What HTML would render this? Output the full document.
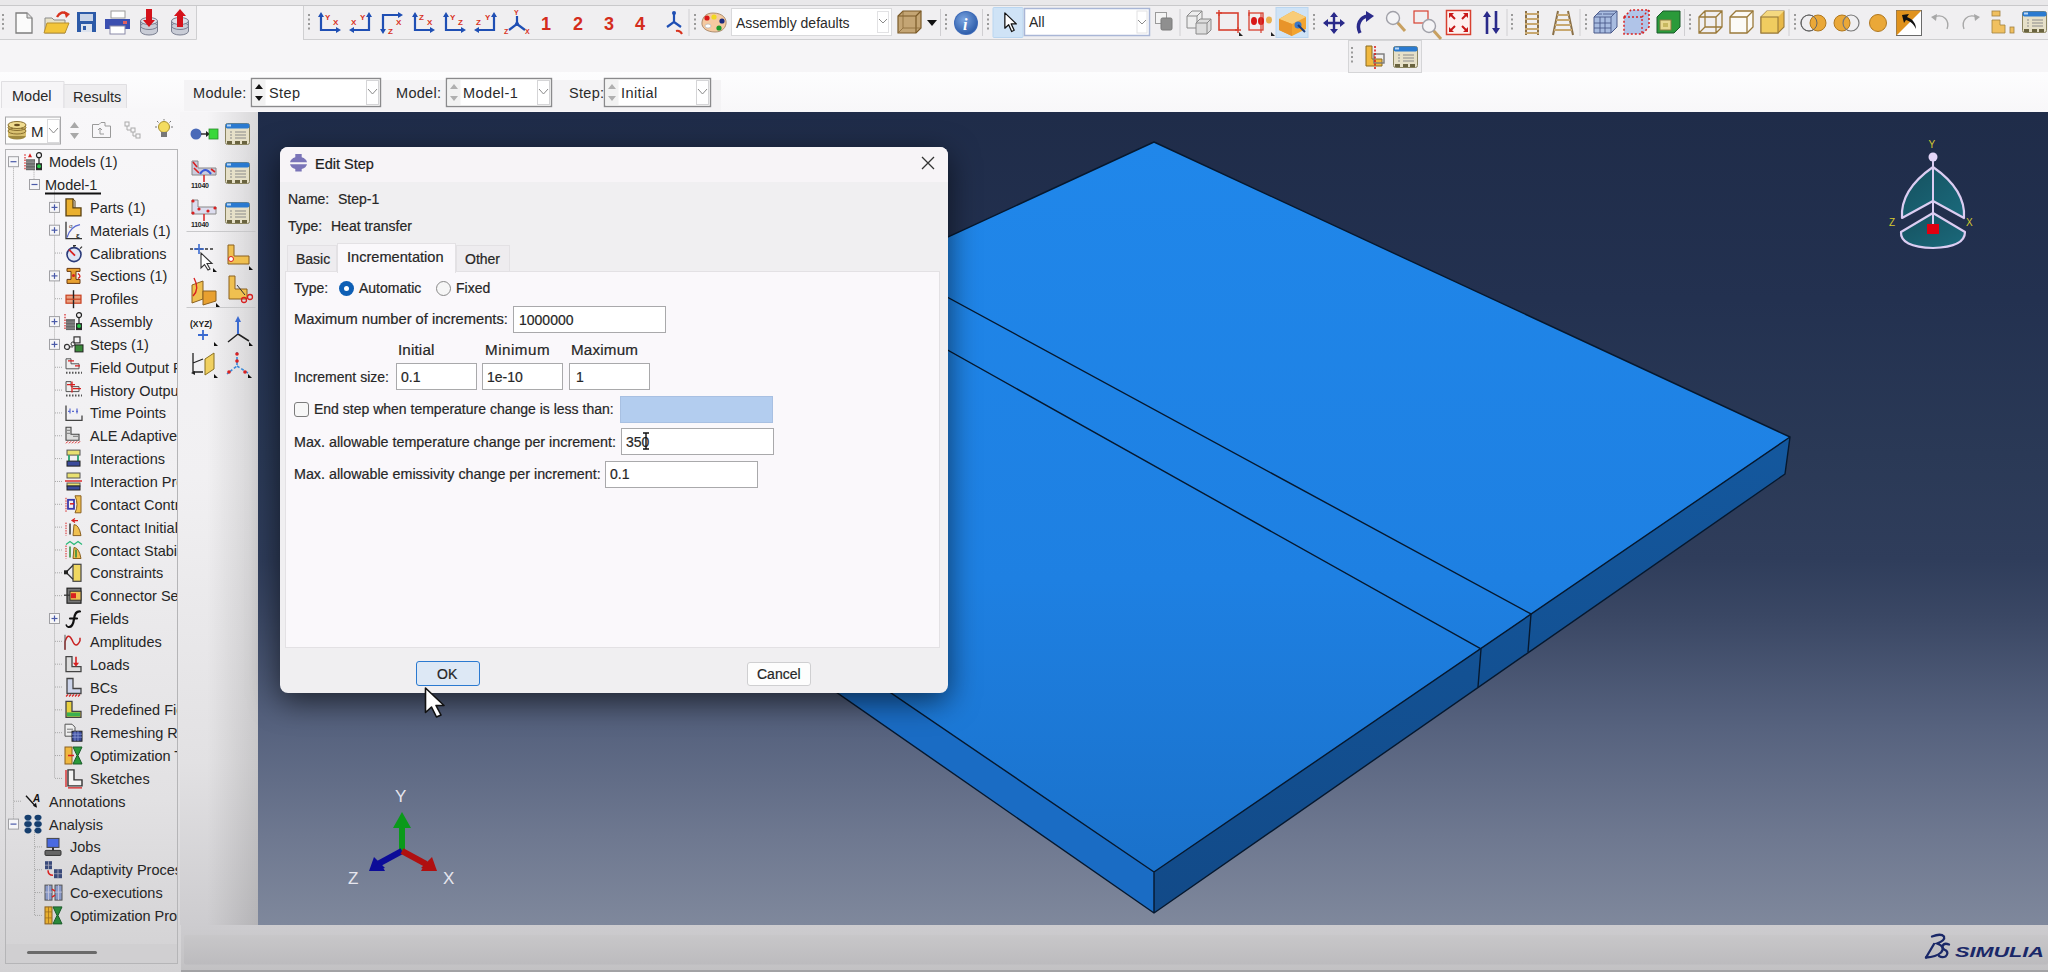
<!DOCTYPE html>
<html><head><meta charset="utf-8">
<style>
*{box-sizing:border-box;margin:0;padding:0}
html,body{width:2048px;height:972px;overflow:hidden;background:#f0f0f0;font-family:"Liberation Sans",sans-serif;color:#222;font-size:14.5px}
svg{font-family:"Liberation Sans",sans-serif}
.a{position:absolute}
.t{position:absolute;white-space:nowrap;line-height:1;-webkit-text-stroke:0.2px currentColor}
#topstrip{left:0;top:0;width:2048px;height:6px;background:#e9e8ea;border-bottom:1px solid #c9c9cb}
#row2{left:0;top:6px;width:2048px;height:66px;background:#f6f5f7}
#row3{left:0;top:72px;width:2048px;height:40px;background:linear-gradient(#fdfdfe,#f8f7f9)}
#dialog{left:280px;top:147px;width:668px;height:546px;background:#f0eff1;border-radius:8px;box-shadow:0 8px 30px rgba(0,0,0,.6);overflow:hidden}
.inp{background:#fff;border:1px solid #a9a9ab}
#dialog .t{color:#262626;font-size:14px}
svg text{stroke:currentColor;stroke-width:0}

</style></head><body>
<svg class="a" style="left:0;top:0" width="2048" height="972" viewBox="0 0 2048 972"><defs><linearGradient id="vbg" x1="0" y1="0" x2="0" y2="1"><stop offset="0" stop-color="#1f2c49"/><stop offset=".23" stop-color="#233150"/><stop offset=".42" stop-color="#2a3956"/><stop offset=".55" stop-color="#2f3d5b"/><stop offset=".62" stop-color="#3a4764"/><stop offset=".756" stop-color="#56627e"/><stop offset=".89" stop-color="#6e7890"/><stop offset="1" stop-color="#7f889c"/></linearGradient><linearGradient id="gtop" gradientUnits="userSpaceOnUse" x1="0" y1="142" x2="0" y2="872"><stop offset="0" stop-color="#2087ea"/><stop offset=".6" stop-color="#1e80e2"/><stop offset="1" stop-color="#1a71ca"/></linearGradient><linearGradient id="gright" gradientUnits="userSpaceOnUse" x1="0" y1="437" x2="0" y2="913"><stop offset="0" stop-color="#14589e"/><stop offset="1" stop-color="#124a88"/></linearGradient><linearGradient id="gpet" x1="0" y1="0" x2="1" y2="1"><stop offset="0" stop-color="#15505e"/><stop offset="1" stop-color="#1b6a7c"/></linearGradient></defs><rect x="258" y="112" width="1790" height="813" fill="url(#vbg)"/><polygon points="1154,142 1790,437 1154,872 514,437" fill="url(#gtop)"/><polygon points="1154,872 1790,437 1785,474 1154,913" fill="url(#gright)"/><polygon points="1154,872 1154,913 700,597.5 700,563" fill="#1a6cc4"/><path d="M514,437 L1154,142 L1790,437 L1154,872 L700,563 M1790,437 L1785,474 L1154,913 L700,597.5 M1154,872 V913" fill="none" stroke="#06182e" stroke-width="1.4" stroke-linejoin="round"/><path d="M888,265 L1531,614 L1528,652 M837,288 L1481,649 L1478,687" fill="none" stroke="#06182e" stroke-width="1.4"/><g stroke="#dccdf2" stroke-width="2.2" fill="url(#gpet)" stroke-linejoin="round"><path d="M1933,167 Q1900,190 1902,218 L1933,201 L1964,218 Q1966,190 1933,167Z"/><path d="M1901,232 L1933,213 L1965,232 Q1965,247 1933,248 Q1900,247 1901,232Z"/></g><path d="M1933,157 V226" stroke="#dccdf2" stroke-width="2"/><circle cx="1933" cy="157" r="4.5" fill="#e4d6f8"/><rect x="1927" y="224" width="12" height="10" fill="#e00010"/><g font-size="10" fill="#d4c830" font-family="Liberation Sans"><text x="1928.5" y="148">Y</text><text x="1889" y="226">Z</text><text x="1966" y="226">X</text></g><path d="M402,851 V826" stroke="#0a9a1a" stroke-width="6"/><path d="M402,812 L411,828 H393Z" fill="#0a9a1a"/><path d="M402,851 L378,864" stroke="#0c0c98" stroke-width="6"/><path d="M369,871 L374,857 L385,868Z" fill="#0c0c98"/><path d="M369,871 H385 L380,862Z" fill="#0c0c98"/><path d="M402,851 L426,864" stroke="#b01010" stroke-width="6"/><path d="M437,871 L432,857 L421,868Z" fill="#b01010"/><path d="M437,871 H421 L426,862Z" fill="#b01010"/><g font-size="17" fill="#e6e6ee" font-family="Liberation Sans"><text x="395" y="802">Y</text><text x="348" y="884">Z</text><text x="443" y="884">X</text></g><defs><linearGradient id="sbg" x1="0" y1="0" x2="0" y2="1"><stop offset="0" stop-color="#cdcccf"/><stop offset="1" stop-color="#c2c1c3"/></linearGradient><linearGradient id="sbg3" x1="0" y1="0" x2="0" y2="1"><stop offset="0" stop-color="#c8c7c9"/><stop offset="1" stop-color="#bcbbbe"/></linearGradient></defs><rect x="180" y="925" width="1868" height="47" fill="url(#sbg)"/><rect x="184" y="935" width="1864" height="29.5" rx="2" fill="url(#sbg3)"/><path d="M180 971 H2048" stroke="#a2a2a4" stroke-width="2"/><g stroke="#1a2868" stroke-width="2.3" fill="none" stroke-linecap="round"><path d="M1932,936.5 Q1941,933 1944,936.5 Q1945.5,940.5 1937,943.5 Q1946,946.5 1941,952.5 Q1936,957 1926,957.5"/><path d="M1926,957.5 L1934,944"/><path d="M1949,944.5 Q1944,942.5 1942.5,946 Q1942,949 1946,950.5 Q1949,953 1945.5,956.5 Q1942,958 1939,956"/></g><text x="1955" y="956.5" font-size="15.5" font-weight="bold" font-style="italic" textLength="89" lengthAdjust="spacingAndGlyphs" fill="#1a2868" stroke="#1a2868" stroke-width=".3" font-family="Liberation Sans">SIMULIA</text></svg>
<div id="topstrip" class="a"></div>
<div id="row2" class="a"></div>
<div id="row3" class="a"></div>
<svg class="a" style="left:0;top:0" width="2048" height="75" viewBox="0 0 2048 75"><defs><radialGradient id="ginfo" cx="0.4" cy="0.35" r="0.7"><stop offset="0" stop-color="#7aa4e0"/><stop offset="1" stop-color="#2a5aa8"/></radialGradient></defs><rect x="0" y="6" width="196.5" height="33" fill="#f0eff1"/><path d="M0 39.5 H196.5 V6" stroke="#cfcfd1" fill="none"/><rect x="303" y="6" width="1745" height="33" fill="#f0eff1"/><path d="M303.5 39 V6 M303 39.5 H2048" stroke="#cfcfd1" fill="none"/><rect x="2" y="14.0" width="2" height="2" fill="#9a9a9a"/><rect x="2" y="18.5" width="2" height="2" fill="#9a9a9a"/><rect x="2" y="23.0" width="2" height="2" fill="#9a9a9a"/><rect x="2" y="27.5" width="2" height="2" fill="#9a9a9a"/><g transform="translate(15,12) scale(1.0)"><path d="M1 1 H12 L17 6 V21 H1Z" fill="#fbfbfb" stroke="#7d7d7d" stroke-width="1.3"/><path d="M12 1 V6 H17" fill="#ddd" stroke="#7d7d7d" stroke-width="1"/></g><g transform="translate(43,9) scale(1.0)"><path d="M2 9 H9 L11 11 H22 V24 H2Z" fill="#e8e2c8" stroke="#8a8a8a" stroke-width="1"/><path d="M4 14 H26 L22 24 H1Z" fill="#f3c53a" stroke="#b89030" stroke-width="1"/><path d="M14 8 Q18 1 24 5" stroke="#d8321e" stroke-width="2.4" fill="none"/><path d="M21 2 L27 5 L23 9Z" fill="#d8321e"/></g><g transform="translate(77,12) scale(1.0)"><rect x="0" y="0" width="19" height="20" fill="#2c5aa8"/><rect x="3" y="2" width="13" height="7" fill="#c8d4e8"/><rect x="4" y="12" width="11" height="8" fill="#dde3ee"/><rect x="6" y="14" width="3" height="4" fill="#2c5aa8"/></g><g transform="translate(105,11) scale(1.0)"><rect x="6" y="0" width="14" height="7" fill="#fff" stroke="#9a9a9a"/><path d="M0 8 H25 V18 H0Z" fill="#3b4fb0"/><rect x="5" y="15" width="15" height="8" fill="#fff" stroke="#8a8aa8"/><rect x="18" y="10" width="4" height="3" fill="#e06060"/></g><g transform="translate(140,9) scale(1.0)"><ellipse cx="9" cy="22" rx="8.5" ry="4" fill="#c9ccd6" stroke="#7a7f90"/><rect x="0.5" y="12" width="17" height="10" fill="#c9ccd6"/><ellipse cx="9" cy="17" rx="8.5" ry="3.5" fill="none" stroke="#7a7f90"/><ellipse cx="9" cy="12" rx="8.5" ry="3.5" fill="#dde0e8" stroke="#7a7f90"/><path d="M0.5 12 V22 M17.5 12 V22" stroke="#7a7f90"/><path d="M6 0 H12 V11 H15 L9 18 L3 11 H6Z" fill="#d4121a"/></g><g transform="translate(171,9) scale(1.0)"><ellipse cx="9" cy="22" rx="8.5" ry="4" fill="#c9ccd6" stroke="#7a7f90"/><rect x="0.5" y="12" width="17" height="10" fill="#c9ccd6"/><ellipse cx="9" cy="17" rx="8.5" ry="3.5" fill="none" stroke="#7a7f90"/><ellipse cx="9" cy="12" rx="8.5" ry="3.5" fill="#dde0e8" stroke="#7a7f90"/><path d="M0.5 12 V22 M17.5 12 V22" stroke="#7a7f90"/><path d="M9 0 L15 7 H12 V18 H6 V7 H3Z" fill="#d4121a"/></g><rect x="308" y="14.0" width="2" height="2" fill="#9a9a9a"/><rect x="308" y="18.5" width="2" height="2" fill="#9a9a9a"/><rect x="308" y="23.0" width="2" height="2" fill="#9a9a9a"/><rect x="308" y="27.5" width="2" height="2" fill="#9a9a9a"/><g transform="translate(318,11) scale(1.0)"><path d="M3 4 V19 H20" stroke="#1f4fb4" stroke-width="2.2" fill="none"/><path d="M0 6 L3 1 L6 6Z M18 16 L23 19 L18 22Z" fill="#1f4fb4"/><text x="7" y="9" font-size="8" font-weight="bold" fill="#d8321e">Y</text><text x="15" y="14" font-size="8" font-weight="bold" fill="#d8321e">X</text></g><g transform="translate(349,11) scale(1.0)"><path d="M20 4 V19 H3" stroke="#1f4fb4" stroke-width="2.2" fill="none"/><path d="M17 6 L20 1 L23 6Z M5 16 L0 19 L5 22Z" fill="#1f4fb4"/><text x="11" y="9" font-size="8" font-weight="bold" fill="#d8321e">Y</text><text x="2" y="14" font-size="8" font-weight="bold" fill="#d8321e">X</text></g><g transform="translate(380,11) scale(1.0)"><path d="M3 20 V4 H20" stroke="#1f4fb4" stroke-width="2.2" fill="none"/><path d="M0 18 L3 23 L6 18Z M18 1 L23 4 L18 7Z" fill="#1f4fb4"/><text x="8" y="23" font-size="8" font-weight="bold" fill="#d8321e">Z</text><text x="16" y="14" font-size="8" font-weight="bold" fill="#d8321e">X</text></g><g transform="translate(412,11) scale(1.0)"><path d="M3 4 V19 H20" stroke="#1f4fb4" stroke-width="2.2" fill="none"/><path d="M0 6 L3 1 L6 6Z M18 16 L23 19 L18 22Z" fill="#1f4fb4"/><text x="7" y="9" font-size="8" font-weight="bold" fill="#d8321e">Z</text><text x="15" y="14" font-size="8" font-weight="bold" fill="#d8321e">X</text></g><g transform="translate(443,11) scale(1.0)"><path d="M3 4 V19 H20" stroke="#1f4fb4" stroke-width="2.2" fill="none"/><path d="M0 6 L3 1 L6 6Z M18 16 L23 19 L18 22Z" fill="#1f4fb4"/><text x="7" y="9" font-size="8" font-weight="bold" fill="#d8321e">Y</text><text x="15" y="14" font-size="8" font-weight="bold" fill="#d8321e">Z</text></g><g transform="translate(474,11) scale(1.0)"><path d="M20 4 V19 H3" stroke="#1f4fb4" stroke-width="2.2" fill="none"/><path d="M17 6 L20 1 L23 6Z M5 16 L0 19 L5 22Z" fill="#1f4fb4"/><text x="11" y="9" font-size="8" font-weight="bold" fill="#d8321e">Y</text><text x="2" y="14" font-size="8" font-weight="bold" fill="#d8321e">Z</text></g><g transform="translate(504,9) scale(1.0)"><path d="M13 7 V15 L5 21 M13 15 L21 21" stroke="#1f4fb4" stroke-width="2.2" fill="none"/><circle cx="13" cy="15" r="2" fill="#1f4fb4"/><text x="10" y="6" font-size="7" font-weight="bold" fill="#d8321e">Y</text><text x="0" y="25" font-size="7" font-weight="bold" fill="#d8321e">Z</text><text x="21" y="25" font-size="7" font-weight="bold" fill="#d8321e">X</text></g><text x="541" y="30" font-size="18" font-weight="bold" fill="#d42c1c" font-family="Liberation Sans">1</text><text x="573" y="30" font-size="18" font-weight="bold" fill="#d42c1c" font-family="Liberation Sans">2</text><text x="604" y="30" font-size="18" font-weight="bold" fill="#d42c1c" font-family="Liberation Sans">3</text><text x="635" y="30" font-size="18" font-weight="bold" fill="#d42c1c" font-family="Liberation Sans">4</text><g transform="translate(664,11) scale(1.0)"><path d="M10 2 V11 L3 16 M10 11 L17 16" stroke="#1f4fb4" stroke-width="2.2" fill="none"/><circle cx="10" cy="2" r="2" fill="#1f4fb4"/><path d="M12 20 Q16 19 18 23" stroke="#d8321e" stroke-width="2" fill="none"/></g><line x1="689" y1="9" x2="689" y2="36" stroke="#d0cfd2" stroke-width="1"/><rect x="694" y="14.0" width="2" height="2" fill="#9a9a9a"/><rect x="694" y="18.5" width="2" height="2" fill="#9a9a9a"/><rect x="694" y="23.0" width="2" height="2" fill="#9a9a9a"/><rect x="694" y="27.5" width="2" height="2" fill="#9a9a9a"/><g transform="translate(701,13) scale(1.0)"><path d="M12 0 C22 0 26 6 25 11 C24 16 20 19 14 19 C6 19 0 15 1 9 C2 3 6 0 12 0Z" fill="#f4c9a0" stroke="#9a7a5a" stroke-width="0.8"/><circle cx="6" cy="5" r="2.6" fill="#d81818"/><circle cx="13" cy="4" r="2.6" fill="#f0d820"/><circle cx="21" cy="8" r="2.6" fill="#1a2a80"/><circle cx="18" cy="15" r="2.6" fill="#1a9a2a"/><ellipse cx="7" cy="13" rx="3" ry="2" fill="#fff" stroke="#aaa" stroke-width="0.6"/></g><rect x="731.5" y="8.5" width="160" height="27" fill="#fff" stroke="#d9d9db"/><rect x="877.5" y="11.5" width="11" height="21" fill="#fff" stroke="#e2e2e4"/><path d="M879 19 L883 23 L887 19" stroke="#8a8a8a" fill="none"/><text x="736" y="27.5" font-size="14" fill="#2a2a2a">Assembly defaults</text><g transform="translate(898,11) scale(1.0)"><path d="M5 0 H23 V17 L18 22 H0 V5Z" fill="#c4a574" stroke="#7a5a28" stroke-width="1.2"/><path d="M0 5 H18 V22 M18 5 L23 0" fill="none" stroke="#7a5a28" stroke-width="1.2"/><path d="M5 0 V17 H23 M5 17 L0 22" fill="none" stroke="#8a6a38" stroke-width="0.8"/></g><path d="M927 20 H937 L932 26Z" fill="#111"/><line x1="940.5" y1="9" x2="940.5" y2="36" stroke="#d0cfd2" stroke-width="1"/><rect x="945" y="14.0" width="2" height="2" fill="#9a9a9a"/><rect x="945" y="18.5" width="2" height="2" fill="#9a9a9a"/><rect x="945" y="23.0" width="2" height="2" fill="#9a9a9a"/><rect x="945" y="27.5" width="2" height="2" fill="#9a9a9a"/><g transform="translate(954,11) scale(1.0)"><circle cx="12" cy="12" r="12" fill="#3d6ab8"/><circle cx="12" cy="12" r="11" fill="url(#ginfo)"/><text x="9" y="19" font-size="16" font-style="italic" font-weight="bold" fill="#fff" font-family="Liberation Serif">i</text></g><line x1="982.5" y1="9" x2="982.5" y2="36" stroke="#d0cfd2" stroke-width="1"/><rect x="987" y="14.0" width="2" height="2" fill="#9a9a9a"/><rect x="987" y="18.5" width="2" height="2" fill="#9a9a9a"/><rect x="987" y="23.0" width="2" height="2" fill="#9a9a9a"/><rect x="987" y="27.5" width="2" height="2" fill="#9a9a9a"/><rect x="993" y="7.5" width="30" height="30" fill="#cfe3f6" stroke="#bad6f0" rx="1"/><g transform="translate(1004,12) scale(0.85)"><path d="M1 1 V19 L5.5 15 L9 23 L12 21.5 L8.5 14 H14.5Z" fill="#fff" stroke="#111" stroke-width="1.5" stroke-linejoin="round"/></g><rect x="1024.5" y="8.5" width="125" height="27" fill="#fff" stroke="#a9b6d6" stroke-width="1.5"/><rect x="1137" y="11" width="10" height="22" fill="#fff" stroke="#e2e2e4"/><path d="M1138 20 L1142 24 L1146 20" stroke="#8a8a8a" fill="none"/><text x="1029" y="27" font-size="14" fill="#2a2a2a">All</text><g transform="translate(1155,12) scale(1.0)"><rect x="0.5" y="0.5" width="11" height="11" fill="#f4f4f4" stroke="#9a9a9a"/><rect x="6" y="6" width="11" height="12" fill="#8f8f8f" stroke="#7a7a7a" rx="1.5"/></g><line x1="1180" y1="9" x2="1180" y2="36" stroke="#d0cfd2" stroke-width="1"/><g transform="translate(1186,11) scale(1.0)"><path d="M1 5 L6 0 H16 V12 L11 17 H1Z" fill="#eee" stroke="#8a8a8a"/><path d="M1 5 H11 V17 M11 5 L16 0" fill="none" stroke="#8a8a8a"/><path d="M10 12 L14 8 H25 V19 L21 23 H10Z" fill="#ddd" stroke="#8a8a8a"/><path d="M10 12 H21 V23 M21 12 L25 8" fill="none" stroke="#8a8a8a"/></g><g transform="translate(1215,10) scale(1.0)"><rect x="4" y="3" width="19" height="17" fill="none" stroke="#d84030" stroke-width="1.6"/><path d="M4 0 V6 M1 3 H7 M23 17 V23 M20 20 H26" stroke="#d84030" stroke-width="1.4"/><path d="M24 22 L28 26 H24Z" fill="#222"/></g><g transform="translate(1246,10) scale(1.0)"><rect x="3" y="3" width="14" height="17" fill="none" stroke="#d84030" stroke-width="1.3"/><ellipse cx="8" cy="11" rx="3" ry="4" fill="#d81818"/><ellipse cx="15" cy="11" rx="3" ry="4" fill="#d81818"/><ellipse cx="23" cy="10" rx="3" ry="3.5" fill="#e8b050"/><path d="M15 3 V23 M3 0 V6" stroke="#d84030" stroke-width="1.2"/><path d="M25 22 L29 26 H25Z" fill="#222"/></g><rect x="1276" y="7.5" width="32" height="30" fill="#cfe3f6" stroke="#bad6f0"/><g transform="translate(1279,11) scale(1.0)"><path d="M0 8 L14 0 L27 6 V18 L13 25 L0 19Z" fill="#f2a430"/><path d="M0 8 L14 0 L27 6 L13 13Z" fill="#f8cc78"/><path d="M13 13 V25 L0 19 V8Z" fill="#e8942a"/><circle cx="19" cy="14" r="3.5" fill="#3a78c8"/><path d="M19 14 L26 21" stroke="#1a3a7a" stroke-width="2"/></g><rect x="1313" y="14.0" width="2" height="2" fill="#9a9a9a"/><rect x="1313" y="18.5" width="2" height="2" fill="#9a9a9a"/><rect x="1313" y="23.0" width="2" height="2" fill="#9a9a9a"/><rect x="1313" y="27.5" width="2" height="2" fill="#9a9a9a"/><g transform="translate(1323,12) scale(1.0)"><path d="M11 2 V20 M2 11 H20" stroke="#2a2a8a" stroke-width="2.4"/><path d="M11 0 L15 5 H7Z M11 22 L15 17 H7Z M0 11 L5 7 V15Z M22 11 L17 7 V15Z" fill="#2a2a8a"/></g><g transform="translate(1356,11) scale(1.0)"><path d="M4 22 C0 14 4 6 12 5" stroke="#2a2a8a" stroke-width="3.5" fill="none"/><path d="M10 0 L18 5 L10 11Z" fill="#2a2a8a"/></g><g transform="translate(1386,11) scale(1.0)"><path d="M11 11 L19 20" stroke="#c8a060" stroke-width="3"/><circle cx="7" cy="7" r="6.5" fill="#f4f4f6" stroke="#a0a0a8" stroke-width="1.4"/></g><g transform="translate(1414,11) scale(1.0)"><rect x="0" y="0" width="14" height="12" fill="none" stroke="#d84030" stroke-width="1.2"/><path d="M19 19 L27 28" stroke="#c8a060" stroke-width="3"/><circle cx="15" cy="15" r="6.5" fill="#f4f4f6" stroke="#a0a0a8" stroke-width="1.4"/></g><g transform="translate(1446,10) scale(1.0)"><rect x="0.5" y="0.5" width="24" height="24" fill="#fdf2f0" stroke="#d84030" stroke-width="1.5"/><path d="M4 4 L9 9 M21 4 L16 9 M4 21 L9 16 M21 21 L16 16" stroke="#c81818" stroke-width="2"/><path d="M3 3 H8 L3 8Z M22 3 H17 L22 8Z M3 22 H8 L3 17Z M22 22 H17 L22 17Z" fill="#c81818"/></g><g transform="translate(1482,11) scale(1.0)"><path d="M5 3 V23 M14 0 V20" stroke="#2a2a8a" stroke-width="2.6"/><path d="M1 6 L5 0 L9 6Z M10 17 L14 23 L18 17Z" fill="#2a2a8a"/></g><line x1="1507" y1="9" x2="1507" y2="36" stroke="#d0cfd2" stroke-width="1"/><rect x="1511" y="14.0" width="2" height="2" fill="#9a9a9a"/><rect x="1511" y="18.5" width="2" height="2" fill="#9a9a9a"/><rect x="1511" y="23.0" width="2" height="2" fill="#9a9a9a"/><rect x="1511" y="27.5" width="2" height="2" fill="#9a9a9a"/><g transform="translate(1523,11) scale(1.0)"><path d="M3 0 V24 M15 0 V24" stroke="#8a7048" stroke-width="2"/><path d="M2 3 H16 M2 8 H16 M2 13 H16 M2 18 H16 M2 22 H16" stroke="#c8a870" stroke-width="2.2"/></g><g transform="translate(1552,11) scale(1.0)"><path d="M6 0 L1 24 M16 0 L21 24" stroke="#8a7048" stroke-width="2"/><path d="M5 4 H17 M4 9 H18 M3 14 H19 M2 19 H20" stroke="#c8a870" stroke-width="2.2"/></g><line x1="1580" y1="9" x2="1580" y2="36" stroke="#d0cfd2" stroke-width="1"/><rect x="1585" y="14.0" width="2" height="2" fill="#9a9a9a"/><rect x="1585" y="18.5" width="2" height="2" fill="#9a9a9a"/><rect x="1585" y="23.0" width="2" height="2" fill="#9a9a9a"/><rect x="1585" y="27.5" width="2" height="2" fill="#9a9a9a"/><g transform="translate(1594,11) scale(1.0)"><path d="M0 6 L6 0 H23 V16 L17 22 H0Z" fill="#a8bce0" stroke="#4a5a8a"/><path d="M0 6 H17 V22 M17 6 L23 0 M6 6 V22 M11 6 V22 M0 12 H17 M0 17 H17 M9 3 H20 M3 3 H8" fill="none" stroke="#4a5a8a" stroke-width="0.9"/></g><g transform="translate(1624,10) scale(1.0)"><path d="M0 7 L7 0 H25 V17 L18 24 H0Z" fill="#b0c4e8" stroke="#d82020" stroke-width="1.5" stroke-dasharray="2 2"/><path d="M0 7 H18 V24 M18 7 L25 0" fill="none" stroke="#d82020" stroke-width="1.3" stroke-dasharray="2 2"/></g><g transform="translate(1657,11) scale(1.0)"><path d="M0 6 L6 0 H23 V16 L17 22 H0Z" fill="#2a9a3a" stroke="#1a5a2a"/><rect x="3" y="9" width="11" height="10" fill="#e8d890" stroke="#8a7a40"/><rect x="6" y="12" width="5" height="4" fill="#c8b860"/></g><line x1="1684.5" y1="9" x2="1684.5" y2="36" stroke="#d0cfd2" stroke-width="1"/><rect x="1689" y="14.0" width="2" height="2" fill="#9a9a9a"/><rect x="1689" y="18.5" width="2" height="2" fill="#9a9a9a"/><rect x="1689" y="23.0" width="2" height="2" fill="#9a9a9a"/><rect x="1689" y="27.5" width="2" height="2" fill="#9a9a9a"/><g transform="translate(1699,11) scale(1.0)"><path d="M0 6 L6 0 H23 V16 L17 22 H0Z M0 6 H17 V22 M17 6 L23 0 M6 0 V16 H23 M6 16 L0 22" fill="none" stroke="#9a7a3a" stroke-width="1.3"/></g><g transform="translate(1730,11) scale(1.0)"><path d="M0 6 L6 0 H23 V16 L17 22 H0Z" fill="#fbfaf6" stroke="#9a7a3a" stroke-width="1.3"/><path d="M0 6 H17 V22 M17 6 L23 0" fill="none" stroke="#9a7a3a" stroke-width="1.3"/></g><g transform="translate(1761,11) scale(1.0)"><path d="M0 6 L6 0 H23 V16 L17 22 H0Z" fill="#e8b848" stroke="#9a7a3a" stroke-width="1.1"/><path d="M0 6 L6 0 H23 L17 6Z" fill="#f4d880"/><rect x="0" y="6" width="17" height="16" fill="#f0cc60" stroke="#9a7a3a" stroke-width="1.1"/></g><line x1="1789" y1="9" x2="1789" y2="36" stroke="#d0cfd2" stroke-width="1"/><rect x="1794" y="14.0" width="2" height="2" fill="#9a9a9a"/><rect x="1794" y="18.5" width="2" height="2" fill="#9a9a9a"/><rect x="1794" y="23.0" width="2" height="2" fill="#9a9a9a"/><rect x="1794" y="27.5" width="2" height="2" fill="#9a9a9a"/><g transform="translate(1801,14) scale(1.0)"><circle cx="8" cy="9" r="8" fill="none" stroke="#777" stroke-width="1.2"/><circle cx="17" cy="9" r="8" fill="#eaa838" stroke="#b07820" stroke-width="1"/><circle cx="8" cy="9" r="8" fill="none" stroke="#666" stroke-width="1"/></g><g transform="translate(1834,14) scale(1.0)"><circle cx="8" cy="9" r="8" fill="#eaa838" stroke="#b07820" stroke-width="1"/><circle cx="17" cy="9" r="8" fill="none" stroke="#777" stroke-width="1.2"/></g><g transform="translate(1869,14) scale(1.0)"><circle cx="9" cy="9" r="8.5" fill="#eaa838" stroke="#b07820" stroke-width="1"/></g><g transform="translate(1896,10) scale(1.0)"><rect x="0.5" y="0.5" width="25" height="25" fill="#fff" stroke="#6a6a6a"/><path d="M0.5 0.5 H25.5 L0.5 25.5Z" fill="#e0921c"/><path d="M6 5 L13 4 L11 7 C17 9 20 14 20 19 C18 14 14 11 10 10 L8 13Z" fill="#111"/></g><g transform="translate(1930,13) scale(1.0)"><path d="M4 4 C14 0 20 8 17 16" stroke="#a8a8a8" stroke-width="1.4" fill="none"/><path d="M7 1 L1 4 L6 8Z" fill="#a8a8a8"/></g><g transform="translate(1961,13) scale(1.0)"><path d="M16 4 C6 0 0 8 3 16" stroke="#a8a8a8" stroke-width="1.4" fill="none"/><path d="M13 1 L19 4 L14 8Z" fill="#a8a8a8"/></g><g transform="translate(1991,11) scale(1.0)"><rect x="1" y="0" width="8" height="5" fill="#f0c060" stroke="#a08040" stroke-width="0.8"/><path d="M1 9 H9 V14 H14 V22 H1Z" fill="#f0c060" stroke="#a08040" stroke-width="0.8"/><rect x="19" y="16" width="4" height="6" fill="#f0c060" stroke="#a08040" stroke-width="0.8"/></g><g transform="translate(2022,11) scale(1.0)"><rect x="0.5" y="0.5" width="24" height="21" rx="2" fill="#e6e0c8" stroke="#8a8460"/><rect x="0.5" y="0.5" width="24" height="5" rx="2" fill="#2a7ad0"/><rect x="2" y="1.5" width="4" height="2" fill="#bcd8f4"/><path d="M5 9 H7 M5 12 H7 M5 15 H7 M10 9 H21 M10 12 H21 M10 15 H21" stroke="#8a8a8a" stroke-width="1.2"/><rect x="2" y="18" width="5" height="3" fill="#6a6440"/><rect x="10" y="18" width="5" height="3" fill="#6a6440"/><rect x="17" y="18" width="5" height="3" fill="#6a6440"/></g><rect x="1348.5" y="40.5" width="73" height="32" fill="#f0eff1" stroke="#d5d5d7"/><rect x="1351" y="47.0" width="2" height="2" fill="#9a9a9a"/><rect x="1351" y="51.5" width="2" height="2" fill="#9a9a9a"/><rect x="1351" y="56.0" width="2" height="2" fill="#9a9a9a"/><rect x="1351" y="60.5" width="2" height="2" fill="#9a9a9a"/><g transform="translate(1365,46)"><path d="M1 0 H7 V13 H17 V20 H1Z" fill="#f0b840" stroke="#8a6a20" stroke-width="1"/><rect x="9" y="8" width="10" height="9" fill="none" stroke="#7a7a7a" stroke-width="1.4"/><path d="M10 0 V24" stroke="#d82020" stroke-width="1.6" stroke-dasharray="2 1.5"/></g><g transform="translate(1393,46) scale(1.0)"><rect x="0.5" y="0.5" width="24" height="21" rx="2" fill="#e6e0c8" stroke="#8a8460"/><rect x="0.5" y="0.5" width="24" height="5" rx="2" fill="#2a7ad0"/><rect x="2" y="1.5" width="4" height="2" fill="#bcd8f4"/><path d="M5 9 H7 M5 12 H7 M5 15 H7 M10 9 H21 M10 12 H21 M10 15 H21" stroke="#8a8a8a" stroke-width="1.2"/><rect x="2" y="18" width="5" height="3" fill="#6a6440"/><rect x="10" y="18" width="5" height="3" fill="#6a6440"/><rect x="17" y="18" width="5" height="3" fill="#6a6440"/></g></svg>
<svg class="a" style="left:0;top:75px" width="2048" height="37" viewBox="0 75 2048 37"><rect x="184" y="80" width="537" height="31" fill="#f4f3f5"/><path d="M1.5 108 V81.5 H64 V108" fill="#f6f5f7" stroke="#e0dfe2"/><path d="M64 108 V84.5 H126.5 V108" fill="#efeef0" stroke="#e0dfe2"/><path d="M0 108.5 H180" stroke="#e0dfe2"/><text x="12" y="101" font-size="14.5" fill="#2a2a2a">Model</text><text x="73" y="102" font-size="14.5" fill="#2a2a2a">Results</text><text x="193" y="98" font-size="14.5" letter-spacing=".3" fill="#2a2a2a">Module:</text><rect x="251.5" y="78.5" width="129" height="28" fill="#fff" stroke="#8a8a8c" stroke-width="1.4"/><rect x="252.5" y="80" width="13" height="25" fill="#f2f2f2"/><path d="M255 89 L259 84 L263 89Z M255 96 L259 101 L263 96Z" fill="#111"/><rect x="366.5" y="80.5" width="12" height="24" fill="#fff" stroke="#d5d5d7"/><path d="M368 89 L372.5 94 L377 89" stroke="#8a8a8a" fill="none"/><text x="269" y="98" font-size="14.5" letter-spacing=".4" fill="#2a2a2a">Step</text><text x="396" y="98" font-size="14.5" letter-spacing=".3" fill="#2a2a2a">Model:</text><rect x="446.5" y="78.5" width="105" height="28" fill="#fff" stroke="#8a8a8c" stroke-width="1.4"/><rect x="447.5" y="80" width="13" height="25" fill="#f2f2f2"/><path d="M450 89 L454 84 L458 89Z M450 96 L454 101 L458 96Z" fill="#b0b0b0"/><rect x="537.5" y="80.5" width="12" height="24" fill="#fff" stroke="#d5d5d7"/><path d="M539 89 L543.5 94 L548 89" stroke="#8a8a8a" fill="none"/><text x="463" y="98" font-size="14.5" letter-spacing=".4" fill="#2a2a2a">Model-1</text><text x="569" y="98" font-size="14.5" letter-spacing=".3" fill="#2a2a2a">Step:</text><rect x="604.5" y="78.5" width="106" height="28" fill="#fff" stroke="#8a8a8c" stroke-width="1.4"/><rect x="605.5" y="80" width="13" height="25" fill="#f2f2f2"/><path d="M608 89 L612 84 L616 89Z M608 96 L612 101 L616 96Z" fill="#b0b0b0"/><rect x="696.5" y="80.5" width="12" height="24" fill="#fff" stroke="#d5d5d7"/><path d="M698 89 L702.5 94 L707 89" stroke="#8a8a8a" fill="none"/><text x="621" y="98" font-size="14.5" letter-spacing=".4" fill="#2a2a2a">Initial</text></svg>
<svg class="a" style="left:0;top:108px" width="258" height="864" viewBox="0 108 258 864"><defs><linearGradient id="lpg" x1="0" y1="0" x2="0" y2="1"><stop offset="0" stop-color="#f8f7f9"/><stop offset=".45" stop-color="#f0eff1"/><stop offset=".8" stop-color="#e2e1e3"/><stop offset="1" stop-color="#d2d1d3"/></linearGradient><linearGradient id="tbg" x1="0" y1="0" x2="0" y2="1"><stop offset="0" stop-color="#f6f5f7"/><stop offset=".45" stop-color="#f1f0f2"/><stop offset=".8" stop-color="#e2e1e3"/><stop offset="1" stop-color="#cdcccf"/></linearGradient><linearGradient id="tbh" x1="0" y1="0" x2="1" y2="0"><stop offset="0" stop-color="#000" stop-opacity="0"/><stop offset=".35" stop-color="#000" stop-opacity="0"/><stop offset="1" stop-color="#000" stop-opacity=".12"/></linearGradient><clipPath id="treeclip"><rect x="6" y="150" width="171" height="793"/></clipPath></defs><rect x="0" y="108" width="181" height="864" fill="url(#lpg)"/><rect x="180" y="112" width="78" height="813" fill="url(#tbg)"/><rect x="180" y="112" width="78" height="813" fill="url(#tbh)"/><rect x="5.5" y="117" width="55" height="27" fill="#fdfdfd" stroke="#a8a8aa"/><g transform="translate(8,121)"><ellipse cx="9" cy="15" rx="9" ry="3.5" fill="#a08a40"/><rect x="0" y="4" width="18" height="11" fill="#d8c070"/><ellipse cx="9" cy="10" rx="9" ry="3" fill="none" stroke="#8a7030"/><ellipse cx="9" cy="6.5" rx="9" ry="3" fill="none" stroke="#8a7030"/><ellipse cx="9" cy="4" rx="9" ry="3.5" fill="#f0dc90" stroke="#8a7030"/><ellipse cx="9" cy="4" rx="3" ry="1.2" fill="#6a5020"/></g><text x="31" y="137" font-size="15" fill="#2a2a2a">M</text><rect x="47.5" y="119.5" width="12" height="23" fill="#fff" stroke="#dadadc"/><path d="M49 128 L53.5 133 L58 128" stroke="#8a8a8a" fill="none"/><path d="M70 128 L74.5 122 L79 128Z M70 133 L74.5 139 L79 133Z" fill="#a8a8a8"/><path d="M92.5 124.5 H99 L101 122.5 H105 V126 H110.5 V137.5 H92.5Z" fill="none" stroke="#9a9a9a"/><path d="M100 128 V134 H104 M98 130 L100 128 L102 130" stroke="#9a9a9a" fill="none"/><g transform="translate(124,121)" stroke="#aaa" fill="none"><rect x="1" y="1" width="4" height="4"/><rect x="7" y="7" width="4" height="4"/><rect x="12" y="13" width="4" height="4"/><path d="M3 5 V9 H7 M9 11 V15 H12"/></g><g transform="translate(155,119)"><circle cx="9" cy="8" r="5.5" fill="#f4dc60" stroke="#a89030"/><rect x="6" y="13" width="6" height="5" fill="#777"/><path d="M9 0 V1.5 M2 2 L3.5 3.5 M16 2 L14.5 3.5 M0 8 H2 M16 8 H18" stroke="#777"/></g><rect x="5.5" y="149.5" width="172" height="814" fill="none" stroke="#b5b5b7"/><rect x="6" y="944" width="171" height="19" fill="#d0cfd1"/><rect x="27" y="951" width="70" height="3" rx="1.5" fill="#6a6a6a"/><g clip-path="url(#treeclip)"><path d="M13.5 167.7 V819.06" stroke="#a8a8a8" stroke-dasharray="1 1"/><path d="M14 801.22 H22" stroke="#a8a8a8" stroke-dasharray="1 1"/><path d="M34 167.7 V179.54" stroke="#a8a8a8" stroke-dasharray="1 1"/><path d="M54.5 190.54 V778.3799999999999" stroke="#a8a8a8" stroke-dasharray="1 1"/><path d="M55 253.06 H62" stroke="#a8a8a8" stroke-dasharray="1 1"/><path d="M55 298.74 H62" stroke="#a8a8a8" stroke-dasharray="1 1"/><path d="M55 367.26 H62" stroke="#a8a8a8" stroke-dasharray="1 1"/><path d="M55 390.1 H62" stroke="#a8a8a8" stroke-dasharray="1 1"/><path d="M55 412.94 H62" stroke="#a8a8a8" stroke-dasharray="1 1"/><path d="M55 435.78 H62" stroke="#a8a8a8" stroke-dasharray="1 1"/><path d="M55 458.62 H62" stroke="#a8a8a8" stroke-dasharray="1 1"/><path d="M55 481.46 H62" stroke="#a8a8a8" stroke-dasharray="1 1"/><path d="M55 504.3 H62" stroke="#a8a8a8" stroke-dasharray="1 1"/><path d="M55 527.14 H62" stroke="#a8a8a8" stroke-dasharray="1 1"/><path d="M55 549.98 H62" stroke="#a8a8a8" stroke-dasharray="1 1"/><path d="M55 572.8199999999999 H62" stroke="#a8a8a8" stroke-dasharray="1 1"/><path d="M55 595.66 H62" stroke="#a8a8a8" stroke-dasharray="1 1"/><path d="M55 641.3399999999999 H62" stroke="#a8a8a8" stroke-dasharray="1 1"/><path d="M55 664.1800000000001 H62" stroke="#a8a8a8" stroke-dasharray="1 1"/><path d="M55 687.02 H62" stroke="#a8a8a8" stroke-dasharray="1 1"/><path d="M55 709.8599999999999 H62" stroke="#a8a8a8" stroke-dasharray="1 1"/><path d="M55 732.7 H62" stroke="#a8a8a8" stroke-dasharray="1 1"/><path d="M55 755.54 H62" stroke="#a8a8a8" stroke-dasharray="1 1"/><path d="M55 778.3799999999999 H62" stroke="#a8a8a8" stroke-dasharray="1 1"/><path d="M34.5 830.06 V915.4200000000001" stroke="#a8a8a8" stroke-dasharray="1 1"/><path d="M35 846.9000000000001 H42" stroke="#a8a8a8" stroke-dasharray="1 1"/><path d="M35 869.74 H42" stroke="#a8a8a8" stroke-dasharray="1 1"/><path d="M35 892.5799999999999 H42" stroke="#a8a8a8" stroke-dasharray="1 1"/><path d="M35 915.4200000000001 H42" stroke="#a8a8a8" stroke-dasharray="1 1"/><rect x="8.5" y="156.7" width="10" height="10" fill="#f6f6f8" stroke="#a0a0a4"/><path d="M10.5 161.7 H16.5" stroke="#4a5aa8" stroke-width="1.2"/><g transform="translate(24,152.2)"><rect x="2" y="7" width="9" height="11" fill="#6a6a6a"/><path d="M3 7 V11 M5 7 V11 M7 7 V11 M9 7 V11 M2 10 H11 M2 13 H11 M2 16 H11" stroke="#9a9a9a" stroke-width=".8"/><path d="M1 2 V18" stroke="#d82020" stroke-width="1.2" stroke-dasharray="1.5 1.2"/><path d="M6 1 L4 5 H8Z" fill="#d82020"/><circle cx="15" cy="3" r="2.5" fill="none" stroke="#222" stroke-width="1.2"/><path d="M15 5.5 V12" stroke="#222" stroke-width="1.2"/><rect x="12" y="11" width="6" height="7" fill="#2a2a2a"/><circle cx="15" cy="14" r="2" fill="#2ac84a"/></g><text x="49" y="167.2" font-size="14.5" fill="#262626">Models (1)</text><rect x="29.5" y="179.5" width="10" height="10" fill="#f6f6f8" stroke="#a0a0a4"/><path d="M31.5 184.5 H37.5" stroke="#4a5aa8" stroke-width="1.2"/><text x="45" y="190.0" font-size="14.5" fill="#262626">Model-1</text><rect x="45" y="192.5" width="56" height="2" fill="#111"/><rect x="49.5" y="202.4" width="10" height="10" fill="#f6f6f8" stroke="#a0a0a4"/><path d="M51.5 207.4 H57.5" stroke="#4a5aa8" stroke-width="1.2"/><path d="M54.5 204.4 V210.4" stroke="#4a5aa8" stroke-width="1.2"/><g transform="translate(64,197.9)"><path d="M2 1 H9 V10 H17 V18 H2Z" fill="#eab030" stroke="#5a4010" stroke-width="1.3"/><path d="M9 1 L11 3 V10" fill="none" stroke="#5a4010" stroke-width="1"/></g><text x="90" y="212.9" font-size="14.5" fill="#262626">Parts (1)</text><rect x="49.5" y="225.2" width="10" height="10" fill="#f6f6f8" stroke="#a0a0a4"/><path d="M51.5 230.2 H57.5" stroke="#4a5aa8" stroke-width="1.2"/><path d="M54.5 227.2 V233.2" stroke="#4a5aa8" stroke-width="1.2"/><g transform="translate(64,220.7)"><path d="M2 1 V18 H18" stroke="#333" stroke-width="1.3" fill="none"/><path d="M3 17 Q6 6 16 4" stroke="#5a6ad0" stroke-width="1.3" fill="none"/><text x="5" y="7" font-size="6" fill="#333">σ</text><text x="12" y="17" font-size="8" font-weight="bold" fill="#333">ε</text></g><text x="90" y="235.7" font-size="14.5" fill="#262626">Materials (1)</text><g transform="translate(64,243.6)"><circle cx="10" cy="11" r="7" fill="#dde4f4" stroke="#2a3a7a" stroke-width="1.6"/><path d="M5 6 L11 12" stroke="#d82020" stroke-width="1.8"/><path d="M9 2 H12 M10 2 V4 M16 5 L18 3" stroke="#333" stroke-width="1.3"/></g><text x="90" y="258.6" font-size="14.5" fill="#262626">Calibrations</text><rect x="49.5" y="270.9" width="10" height="10" fill="#f6f6f8" stroke="#a0a0a4"/><path d="M51.5 275.9 H57.5" stroke="#4a5aa8" stroke-width="1.2"/><path d="M54.5 272.9 V278.9" stroke="#4a5aa8" stroke-width="1.2"/><g transform="translate(64,266.4)"><path d="M3 2 H16 V5 H12 V13 H16 V17 H3 V13 H7 V5 H3Z" fill="#e8a030" stroke="#6a3a10" stroke-width="1"/><path d="M14 7 Q18 10 14 12" stroke="#d82020" stroke-width="1.3" fill="none"/><circle cx="9.5" cy="9" r="1.5" fill="#d82020"/></g><text x="90" y="281.4" font-size="14.5" fill="#262626">Sections (1)</text><g transform="translate(64,289.2)"><rect x="2" y="6" width="15" height="8" fill="#e8a080" stroke="#c84020" stroke-width="1.2"/><path d="M9.5 1 V19" stroke="#222" stroke-width="1.4"/><path d="M2 10 H17" stroke="#c84020" stroke-width="1.2"/></g><text x="90" y="304.2" font-size="14.5" fill="#262626">Profiles</text><rect x="49.5" y="316.6" width="10" height="10" fill="#f6f6f8" stroke="#a0a0a4"/><path d="M51.5 321.6 H57.5" stroke="#4a5aa8" stroke-width="1.2"/><path d="M54.5 318.6 V324.6" stroke="#4a5aa8" stroke-width="1.2"/><g transform="translate(64,312.1)"><rect x="2" y="7" width="9" height="11" fill="#6a6a6a"/><path d="M2 10 H11 M2 13 H11 M2 16 H11" stroke="#9a9a9a" stroke-width=".8"/><path d="M1 2 V18" stroke="#d82020" stroke-width="1.2" stroke-dasharray="1.5 1.2"/><circle cx="15" cy="3" r="2.5" fill="none" stroke="#222" stroke-width="1.2"/><path d="M15 5.5 V12" stroke="#222" stroke-width="1.2"/><rect x="12" y="11" width="6" height="7" fill="#2a2a2a"/><circle cx="15" cy="14" r="2" fill="#2ac84a"/></g><text x="90" y="327.1" font-size="14.5" fill="#262626">Assembly</text><rect x="49.5" y="339.4" width="10" height="10" fill="#f6f6f8" stroke="#a0a0a4"/><path d="M51.5 344.4 H57.5" stroke="#4a5aa8" stroke-width="1.2"/><path d="M54.5 341.4 V347.4" stroke="#4a5aa8" stroke-width="1.2"/><g transform="translate(64,334.9)"><circle cx="3" cy="12" r="2.5" fill="none" stroke="#333" stroke-width="1.2"/><path d="M5.5 12 H9" stroke="#333"/><circle cx="9" cy="9" r="2" fill="none" stroke="#333"/><rect x="10" y="2" width="6" height="6" fill="none" stroke="#333" stroke-width="1.2"/><rect x="11" y="10" width="8" height="7" fill="#3a8a3a" stroke="#222"/></g><text x="90" y="349.9" font-size="14.5" fill="#262626">Steps (1)</text><g transform="translate(64,357.8)"><path d="M2 1 H7 V6 H15 V11 H2Z" fill="#eee" stroke="#555" stroke-width="1"/><path d="M4 3 H10 M11 8 H16" stroke="#d82020" stroke-width="1.3"/><path d="M2 15 H18" stroke="#555" stroke-dasharray="1.5 1.5" stroke-width="2"/></g><text x="90" y="372.8" font-size="14.5" fill="#262626">Field Output Requests</text><g transform="translate(64,380.6)"><path d="M2 1 H7 V6 H15 V11 H2Z" fill="#eee" stroke="#555" stroke-width="1"/><path d="M3 4 H11 M9 8 H17 M8 1 V12" stroke="#d82020" stroke-width="1.3"/><path d="M2 15 H18" stroke="#555" stroke-dasharray="1.5 1.5" stroke-width="2"/></g><text x="90" y="395.6" font-size="14.5" fill="#262626">History Output Requests</text><g transform="translate(64,403.4)"><path d="M2 2 V17 H18 V12" stroke="#444" stroke-width="1.3" fill="none"/><path d="M4 8 H16" stroke="#5a6ad0" stroke-width="1.4" stroke-dasharray="2 2"/><path d="M6 5 V10 M13 5 V10" stroke="#5a6ad0" stroke-width="1.2"/></g><text x="90" y="418.4" font-size="14.5" fill="#262626">Time Points</text><g transform="translate(64,426.3)"><path d="M2 1 H7 V8 H15 V14 H2Z" fill="#ddd" stroke="#444" stroke-width="1.1"/><path d="M3 4 H6 M3 7 H6 M9 10 H14" stroke="#777"/><path d="M2 17 L4 15 M5 17 L7 15 M8 17 L10 15 M11 17 L13 15 M14 17 L16 15" stroke="#d82020" stroke-width="1"/></g><text x="90" y="441.3" font-size="14.5" fill="#262626">ALE Adaptive Mesh Constraints</text><g transform="translate(64,449.1)"><rect x="3" y="1" width="13" height="5" fill="#e8e070" stroke="#555"/><path d="M5 6 V12 M14 6 V12" stroke="#3aa878" stroke-width="2"/><rect x="3" y="12" width="13" height="5" fill="#3a4a9a" stroke="#222"/></g><text x="90" y="464.1" font-size="14.5" fill="#262626">Interactions</text><g transform="translate(64,472.0)"><rect x="3" y="1" width="13" height="5" fill="#e8e070" stroke="#555"/><path d="M1 9 H18" stroke="#d82020" stroke-width="1.4"/><rect x="3" y="11" width="13" height="3" fill="#e8e070" stroke="#555"/><rect x="3" y="14" width="13" height="4" fill="#3a4a9a" stroke="#222"/></g><text x="90" y="487.0" font-size="14.5" fill="#262626">Interaction Properties</text><g transform="translate(64,494.8)"><path d="M11 1 H17 V18 H11 Q15 10 11 1Z" fill="#f0c050" stroke="#8a6020"/><rect x="4" y="5" width="6" height="9" fill="none" stroke="#3a3aaa" stroke-width="1.8"/><path d="M2 3 V17" stroke="#d82020" stroke-dasharray="1.5 1"/><path d="M6 9 H10" stroke="#d82020" stroke-width="1.5"/></g><text x="90" y="509.8" font-size="14.5" fill="#262626">Contact Controls</text><g transform="translate(64,517.6)"><path d="M10 7 Q15 7 17 18 H9Z" fill="#f0c050" stroke="#8a6020"/><path d="M2 5 V18" stroke="#d82020" stroke-dasharray="1.5 1"/><path d="M6 6 V17" stroke="#333" stroke-width="1.5"/><path d="M8 3 H14 M11 1 L8 3 L11 5" stroke="#d82020" stroke-width="1.2" fill="none"/></g><text x="90" y="532.6" font-size="14.5" fill="#262626">Contact Initializations</text><g transform="translate(64,540.5)"><path d="M10 7 Q15 7 17 18 H9Z" fill="#f0c050" stroke="#8a6020"/><path d="M2 5 V18" stroke="#d82020" stroke-dasharray="1.5 1"/><path d="M6 6 V17 M12 9 V17" stroke="#2a8a3a" stroke-width="1.5"/><path d="M2 4 L6 1 L10 4 L14 1 L18 4" stroke="#2ab878" stroke-width="1.2" fill="none"/></g><text x="90" y="555.5" font-size="14.5" fill="#262626">Contact Stabilizations</text><g transform="translate(64,563.3)"><rect x="9" y="1" width="8" height="17" fill="#f0d860" stroke="#444" stroke-width="1.2"/><path d="M9 2 L2 9 L9 16" fill="none" stroke="#333" stroke-width="1.3"/><rect x="0" y="7" width="4" height="4" fill="#222"/></g><text x="90" y="578.3" font-size="14.5" fill="#262626">Constraints</text><g transform="translate(64,586.2)"><rect x="3" y="2" width="14" height="15" fill="#777" stroke="#222" stroke-width="1.2"/><rect x="6" y="5" width="11" height="9" fill="#f0c050" stroke="#333"/><rect x="7" y="7" width="5" height="5" fill="#d82020"/><path d="M0 9 H6" stroke="#333" stroke-width="1.3"/></g><text x="90" y="601.2" font-size="14.5" fill="#262626">Connector Sections</text><rect x="49.5" y="613.5" width="10" height="10" fill="#f6f6f8" stroke="#a0a0a4"/><path d="M51.5 618.5 H57.5" stroke="#4a5aa8" stroke-width="1.2"/><path d="M54.5 615.5 V621.5" stroke="#4a5aa8" stroke-width="1.2"/><g transform="translate(64,609.0)"><path d="M5 18 Q9 18 10 10 Q11 2 16 2.5 M6 9.5 H13" stroke="#111" stroke-width="2.2" fill="none" stroke-linecap="round"/><path d="M2 15.5 Q3 18.5 5 18" stroke="#111" stroke-width="1.6" fill="none"/></g><text x="90" y="624.0" font-size="14.5" fill="#262626">Fields</text><g transform="translate(64,631.8)"><path d="M1 18 V10 Q4 0 8 8 Q12 18 16 9 V6" stroke="#c82020" stroke-width="1.5" fill="none"/><path d="M1 3 V18" stroke="#555" stroke-width="1"/></g><text x="90" y="646.8" font-size="14.5" fill="#262626">Amplitudes</text><g transform="translate(64,654.7)"><path d="M2 2 H8 V12 H17 V17 H2Z" fill="#ddd" stroke="#444" stroke-width="1.3"/><path d="M12 2 V10" stroke="#d82020" stroke-width="1.6"/><path d="M9 8 L12 12 L15 8Z" fill="#d82020"/></g><text x="90" y="669.7" font-size="14.5" fill="#262626">Loads</text><g transform="translate(64,677.5)"><path d="M3 1 H9 V11 H17 V16 H3Z" fill="#ccd4ea" stroke="#444" stroke-width="1.3"/><path d="M2 19 L4 17 M5 19 L7 17 M8 19 L10 17 M11 19 L13 17 M14 19 L16 17" stroke="#d82020" stroke-width="1.1"/></g><text x="90" y="692.5" font-size="14.5" fill="#262626">BCs</text><g transform="translate(64,700.4)"><path d="M2 1 H8 V11 H17 V17 H2Z" fill="#e8d040" stroke="#444" stroke-width="1.3"/><path d="M3 12 H16 V16 H3Z" fill="#3ab050"/></g><text x="90" y="715.4" font-size="14.5" fill="#262626">Predefined Fields</text><g transform="translate(64,723.2)"><path d="M1 1 H8 L11 4 V13 H1Z" fill="#eee" stroke="#555"/><path d="M3 6 H9 M3 9 H9" stroke="#777"/><rect x="8" y="8" width="10" height="10" fill="#3a4a9a" stroke="#222"/><path d="M11 8 V18 M14 8 V18 M8 11 H18 M8 14 H18" stroke="#8a9ad8" stroke-width=".8"/></g><text x="90" y="738.2" font-size="14.5" fill="#262626">Remeshing Rules</text><g transform="translate(64,746.0)"><rect x="1" y="1" width="7" height="17" fill="#f0b840" stroke="#8a6020"/><path d="M9 1 H18 L14 9.5 L18 18 H9 L13 9.5Z" fill="#2a9a3a" stroke="#1a5a2a"/><path d="M4 9.5 H10" stroke="#d82020" stroke-width="1.5"/></g><text x="90" y="761.0" font-size="14.5" fill="#262626">Optimization Tasks</text><g transform="translate(64,768.9)"><path d="M4 1 H10 V11 H18 V17 H4Z" fill="#f4f4f4" stroke="#333" stroke-width="1.4"/><path d="M2 1 V18 M4 19 H18" stroke="#d82020" stroke-width="1.3"/></g><text x="90" y="783.9" font-size="14.5" fill="#262626">Sketches</text><g transform="translate(24,791.7)"><path d="M2 4 L12 15" stroke="#111" stroke-width="1.3"/><path d="M13 16 L9 14 L12 11Z" fill="#111"/><text x="9" y="10" font-size="10" font-weight="bold" font-style="italic" fill="#111">A</text></g><text x="49" y="806.7" font-size="14.5" fill="#262626">Annotations</text><rect x="8.5" y="819.1" width="10" height="10" fill="#f6f6f8" stroke="#a0a0a4"/><path d="M10.5 824.1 H16.5" stroke="#4a5aa8" stroke-width="1.2"/><g transform="translate(24,814.6)"><g fill="#173f6e"><ellipse cx="4" cy="3" rx="3.5" ry="2.8"/><ellipse cx="4" cy="9.5" rx="3.8" ry="3"/><ellipse cx="4" cy="16" rx="3.5" ry="2.8"/><rect x="2.5" y="2" width="3" height="15"/><ellipse cx="14" cy="3" rx="3.5" ry="2.8"/><ellipse cx="14" cy="9.5" rx="3.8" ry="3"/><ellipse cx="14" cy="16" rx="3.5" ry="2.8"/><rect x="12.5" y="2" width="3" height="15"/></g><path d="M1.5 6.3 H6.5 M1.5 12.8 H6.5 M11.5 6.3 H16.5 M11.5 12.8 H16.5" stroke="#9ab8d8" stroke-width=".8"/></g><text x="49" y="829.6" font-size="14.5" fill="#262626">Analysis</text><g transform="translate(44,837.4)"><rect x="3" y="1" width="12" height="9" fill="#4a6ae0" stroke="#444"/><path d="M9 10 V13" stroke="#333" stroke-width="2"/><rect x="1" y="13" width="16" height="5" rx="1" fill="#666" stroke="#333"/></g><text x="70" y="852.4" font-size="14.5" fill="#262626">Jobs</text><g transform="translate(44,860.2)"><rect x="1" y="1" width="7" height="8" fill="#3a4a7a"/><path d="M4.5 1 V9 M1 5 H8" stroke="#aab" stroke-width=".8"/><rect x="10" y="9" width="8" height="9" fill="#3a4a7a"/><path d="M14 9 V18 M10 13.5 H18" stroke="#aab" stroke-width=".8"/><path d="M4 10 Q4 15 9 15" stroke="#d82020" stroke-width="1.5" fill="none"/></g><text x="70" y="875.2" font-size="14.5" fill="#262626">Adaptivity Processes</text><g transform="translate(44,883.1)"><rect x="1" y="2" width="7" height="15" fill="#8a9ac8" stroke="#555"/><rect x="11" y="2" width="7" height="15" fill="#8a9ac8" stroke="#555"/><path d="M4.5 2 V17 M14.5 2 V17 M1 9 H8 M11 9 H18" stroke="#ccd" stroke-width=".8"/><path d="M8 6 L11 8 M11 12 L8 14" stroke="#d82020" stroke-width="1.4"/></g><text x="70" y="898.1" font-size="14.5" fill="#262626">Co-executions</text><g transform="translate(44,905.9)"><rect x="1" y="1" width="7" height="17" fill="#e8b030" stroke="#8a6020"/><path d="M4.5 1 V18 M1 6 H8 M1 12 H8" stroke="#a07020" stroke-width=".8"/><path d="M9 1 H18 L14 9.5 L18 18 H9 L13 9.5Z" fill="#2a8a3a" stroke="#1a5a2a"/></g><text x="70" y="920.9" font-size="14.5" fill="#262626">Optimization Processes</text></g><g transform="translate(190,128)"><circle cx="6" cy="6" r="5.5" fill="#4a6ab8"/><path d="M11 6 H19" stroke="#222" stroke-width="1.4"/><path d="M16 3 L20 6 L16 9Z" fill="#222"/><rect x="19" y="1" width="9" height="10" fill="#3ad83a" stroke="#2a8a2a" stroke-width=".8"/></g><g transform="translate(225,123) scale(1.0)"><rect x="0.5" y="0.5" width="24" height="21" rx="2" fill="#e6e0c8" stroke="#8a8460"/><rect x="0.5" y="0.5" width="24" height="5" rx="2" fill="#2a7ad0"/><rect x="2" y="1.5" width="4" height="2" fill="#bcd8f4"/><path d="M5 9 H7 M5 12 H7 M5 15 H7 M10 9 H21 M10 12 H21 M10 15 H21" stroke="#8a8a8a" stroke-width="1.2"/><rect x="2" y="18" width="5" height="3" fill="#6a6440"/><rect x="10" y="18" width="5" height="3" fill="#6a6440"/><rect x="17" y="18" width="5" height="3" fill="#6a6440"/></g><g transform="translate(191,160)"><path d="M1 1 H7 V8 H25 V15 H1Z" fill="#ccd" stroke="#888"/><path d="M2 2 L6 7 M3 8 L8 13" stroke="#d82020" stroke-width="1.6"/><path d="M9 14 Q14 6 20 14" stroke="#3a5ad8" stroke-width="2.2" fill="none"/><path d="M20 9 L24 12" stroke="#d82020" stroke-width="1.6"/><path d="M13 15 V22" stroke="#d82020" stroke-width="1.5"/><text x="0" y="28" font-size="7" font-weight="bold" fill="#222" letter-spacing="-.3">11040</text></g><g transform="translate(225,162) scale(1.0)"><rect x="0.5" y="0.5" width="24" height="21" rx="2" fill="#e6e0c8" stroke="#8a8460"/><rect x="0.5" y="0.5" width="24" height="5" rx="2" fill="#2a7ad0"/><rect x="2" y="1.5" width="4" height="2" fill="#bcd8f4"/><path d="M5 9 H7 M5 12 H7 M5 15 H7 M10 9 H21 M10 12 H21 M10 15 H21" stroke="#8a8a8a" stroke-width="1.2"/><rect x="2" y="18" width="5" height="3" fill="#6a6440"/><rect x="10" y="18" width="5" height="3" fill="#6a6440"/><rect x="17" y="18" width="5" height="3" fill="#6a6440"/></g><g transform="translate(191,199)"><path d="M1 1 H7 V8 H25 V15 H1Z" fill="#dde" stroke="#888"/><circle cx="2" cy="2" r="1.6" fill="#d82020"/><circle cx="8" cy="10" r="1.6" fill="#d82020"/><circle cx="17" cy="12" r="1.6" fill="#d82020"/><circle cx="24" cy="9" r="1.6" fill="#d82020"/><circle cx="2" cy="14" r="1.6" fill="#d82020"/><path d="M13 15 V22" stroke="#d82020" stroke-width="1.5"/><text x="0" y="28" font-size="7" font-weight="bold" fill="#222" letter-spacing="-.3">11040</text></g><g transform="translate(225,202) scale(1.0)"><rect x="0.5" y="0.5" width="24" height="21" rx="2" fill="#e6e0c8" stroke="#8a8460"/><rect x="0.5" y="0.5" width="24" height="5" rx="2" fill="#2a7ad0"/><rect x="2" y="1.5" width="4" height="2" fill="#bcd8f4"/><path d="M5 9 H7 M5 12 H7 M5 15 H7 M10 9 H21 M10 12 H21 M10 15 H21" stroke="#8a8a8a" stroke-width="1.2"/><rect x="2" y="18" width="5" height="3" fill="#6a6440"/><rect x="10" y="18" width="5" height="3" fill="#6a6440"/><rect x="17" y="18" width="5" height="3" fill="#6a6440"/></g><path d="M186.5 231.5 H255.5" stroke="#c8c8ca"/><g transform="translate(189,244)"><path d="M1 5 H24" stroke="#333" stroke-width="1.3" stroke-dasharray="3 2"/><path d="M10 0 V10 M5 5 H15" stroke="#3a6ad0" stroke-width="1.6"/><path d="M12 9 V24 L15.5 20.5 L19 26 L21 25 L18 19.5 H23Z" fill="#fff" stroke="#333" stroke-width="1.1"/><path d="M24 24 L28 28 H24Z" fill="#111"/></g><g transform="translate(225,244)"><path d="M3 1 H9 V12 H24 V20 H3Z" fill="#f0c050" stroke="#8a6020"/><circle cx="6" cy="15" r="2.5" fill="#fff" stroke="#d82020"/><path d="M24 22 L28 26 H24Z" fill="#111"/></g><g transform="translate(190,275)"><path d="M2 10 L13 6 V24 L2 28Z" fill="#f0c050" stroke="#8a6020"/><path d="M13 16 H26 V26 L13 30Z" fill="#e8a030" stroke="#8a6020"/><path d="M4 3 Q10 14 3 21" stroke="#d82020" stroke-width="1.4" fill="none"/><path d="M26 28 L30 32 H26Z" fill="#111"/></g><g transform="translate(225,275)"><path d="M4 1 H10 V14 H22 V24 H4Z" fill="#f0c050" stroke="#8a6020"/><path d="M12 10 L20 20" stroke="#333" stroke-width="1"/><circle cx="19" cy="25" r="2.5" fill="none" stroke="#d82020" stroke-width="1.3"/><circle cx="25" cy="22" r="2.5" fill="none" stroke="#d82020" stroke-width="1.3"/></g><path d="M186.5 307.5 H255.5" stroke="#c8c8ca"/><g transform="translate(190,318)"><text x="0" y="9" font-size="8.5" font-weight="bold" fill="#222">(XYZ)</text><path d="M13 12 V22 M8 17 H18" stroke="#3a6ad0" stroke-width="1.8"/><path d="M24 24 L28 28 H24Z" fill="#111"/></g><g transform="translate(225,316)"><path d="M13 2 V18 L3 26 M13 18 L24 25" stroke="#222" stroke-width="1.5" fill="none"/><path d="M13 0 L10 6 H16Z" fill="#3a6ad0"/><path d="M13 6 V18" stroke="#3a6ad0" stroke-width="2"/><path d="M24 26 L28 30 H24Z" fill="#111"/></g><g transform="translate(190,350)"><path d="M3 13 V3 M3 13 L13 9 M3 13 V22 H13" stroke="#222" stroke-width="1.3" fill="none"/><path d="M15 9 L24 3 V19 L15 25Z" fill="#f0d060" stroke="#8a7020"/><path d="M1 23 L5 21 V25Z" fill="#222"/><path d="M24 24 L28 28 H24Z" fill="#111"/></g><g transform="translate(224,350)"><path d="M13 2 V16 L3 24 M13 16 L24 23" stroke="#3a8ad8" stroke-width="1.6" fill="none" stroke-dasharray="3 2"/><circle cx="13" cy="4" r="1.8" fill="#d82020"/><circle cx="13" cy="11" r="1.8" fill="#d82020"/><circle cx="5" cy="22" r="1.8" fill="#d82020"/><circle cx="21" cy="22" r="1.8" fill="#d82020"/><path d="M24 24 L28 28 H24Z" fill="#111"/></g></svg>
<div id="dialog" class="a">
 <div class="a" style="left:0;top:0;width:668px;height:35px;background:#f7f4f7"></div>
 <svg class="a" style="left:10px;top:7px" width="18" height="18" viewBox="0 0 18 18"><path d="M5.3 0 H11.7 V3.3 Q16.3 4.8 17 8.2 H0 Q0.8 4.8 5.3 3.3Z" fill="#7a74b8"/><path d="M0 10.2 H17 Q16.3 13.6 11.7 15 V17.6 H5.3 V15 Q0.8 13.6 0 10.2Z" fill="#7a74b8"/></svg>
 <div class="t" style="left:35px;top:10px;font-size:14.5px;color:#202020">Edit Step</div>
 <svg class="a" style="left:641px;top:9px" width="14" height="14" viewBox="0 0 14 14"><path d="M1 1 L13 13 M13 1 L1 13" stroke="#333" stroke-width="1.3"/></svg>
 <div class="t" style="left:8px;top:45px">Name:</div>
 <div class="t" style="left:58px;top:45px">Step-1</div>
 <div class="t" style="left:8px;top:72px">Type:</div>
 <div class="t" style="left:51px;top:72px">Heat transfer</div>
 <div class="a" style="left:7px;top:98px;width:50px;height:27px;background:#eeecef;border:1px solid #e3e1e4;border-bottom:none"></div>
 <div class="a" style="left:176px;top:98px;width:54px;height:27px;background:#eeecef;border:1px solid #e3e1e4;border-bottom:none"></div>
 <div class="a" style="left:5px;top:124px;width:655px;height:377px;background:#faf8fb;border:1px solid #e3e1e4"></div>
 <div class="a" style="left:57px;top:96px;width:119px;height:30px;background:#faf8fb;border:1px solid #e3e1e4;border-bottom:none"></div>
 <div class="t" style="left:16px;top:105px">Basic</div>
 <div class="t" style="left:67px;top:103px;font-size:14.6px">Incrementation</div>
 <div class="t" style="left:185px;top:105px">Other</div>
 <div class="t" style="left:14px;top:134px">Type:</div>
 <div class="a" style="left:59px;top:134px;width:15px;height:15px;border-radius:50%;background:#0e5fb5"></div>
 <div class="a" style="left:64px;top:139px;width:5px;height:5px;border-radius:50%;background:#fff"></div>
 <div class="t" style="left:79px;top:134px">Automatic</div>
 <div class="a" style="left:156px;top:134px;width:15px;height:15px;border-radius:50%;border:1.3px solid #8a8a8a;background:#f6f6f6"></div>
 <div class="t" style="left:176px;top:134px">Fixed</div>
 <div class="t" style="left:14px;top:165px;font-size:14.7px">Maximum number of increments:</div>
 <div class="a inp" style="left:233px;top:159px;width:153px;height:27px"></div>
 <div class="t" style="left:239px;top:166px">1000000</div>
 <div class="t" style="left:118px;top:195px;font-size:15.2px;letter-spacing:.15px">Initial</div>
 <div class="t" style="left:205px;top:195px;font-size:15.2px;letter-spacing:.5px">Minimum</div>
 <div class="t" style="left:291px;top:195px;font-size:15.2px;letter-spacing:.2px">Maximum</div>
 <div class="t" style="left:14px;top:223px">Increment size:</div>
 <div class="a inp" style="left:116px;top:216px;width:81px;height:27px"></div>
 <div class="a inp" style="left:202px;top:216px;width:81px;height:27px"></div>
 <div class="a inp" style="left:289px;top:216px;width:81px;height:27px"></div>
 <div class="t" style="left:121px;top:223px">0.1</div>
 <div class="t" style="left:207px;top:223px">1e-10</div>
 <div class="t" style="left:296px;top:223px">1</div>
 <div class="a" style="left:14px;top:255px;width:15px;height:15px;border:1.3px solid #7c7c7c;border-radius:3px;background:#f7f7f7"></div>
 <div class="t" style="left:34px;top:255px">End step when temperature change is less than:</div>
 <div class="a" style="left:340px;top:249px;width:153px;height:27px;background:#b3cdef;border:1px solid #a8c0e2"></div>
 <div class="t" style="left:14px;top:288px;font-size:14.3px">Max. allowable temperature change per increment:</div>
 <div class="a inp" style="left:341px;top:281px;width:153px;height:27px"></div>
 <div class="t" style="left:346px;top:288px">350</div>
 <svg class="a" style="left:362px;top:285px" width="8" height="18" viewBox="0 0 8 18"><path d="M1 1 H7 M4 1 V17 M1 17 H7" stroke="#111" stroke-width="1.4"/></svg>
 <div class="t" style="left:14px;top:320px;font-size:14.3px">Max. allowable emissivity change per increment:</div>
 <div class="a inp" style="left:325px;top:314px;width:153px;height:27px"></div>
 <div class="t" style="left:330px;top:320px">0.1</div>
 <div class="a" style="left:136px;top:514px;width:64px;height:25px;border:1.5px solid #2a79d0;border-radius:3px;background:#dde8f5"></div>
 <div class="t" style="left:157px;top:520px">OK</div>
 <div class="a" style="left:467px;top:515px;width:64px;height:24px;border:1px solid #cfcfd1;border-radius:3px;background:#fdfdfd"></div>
 <div class="t" style="left:477px;top:520px">Cancel</div>
</div>

<svg class="a" style="left:0;top:0" width="2048" height="972" viewBox="0 0 2048 972"><path d="M425.5,688 V712.5 L431.5,707 L436.5,717 L441,715 L436,705.5 H444Z" fill="#fff" stroke="#111" stroke-width="1.6" stroke-linejoin="round"/></svg>
</body></html>
